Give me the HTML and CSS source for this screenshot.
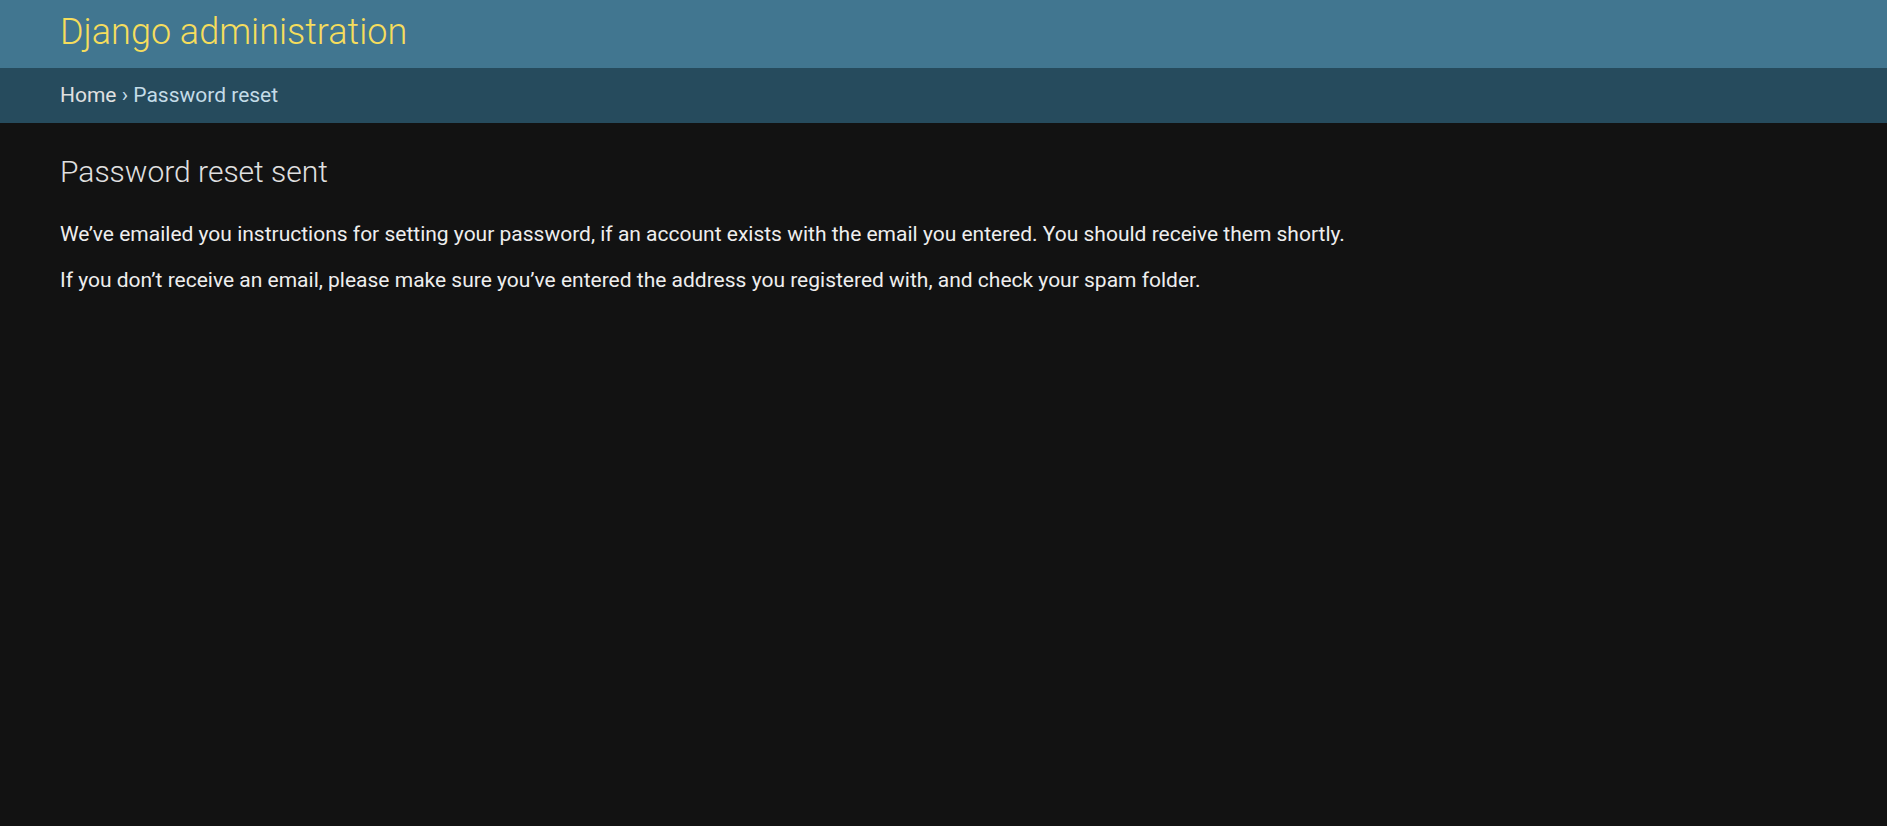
FILE: index.html
```html
<!DOCTYPE html>
<html>
    <head>
        <title>Password reset sent | Django site admin</title>
        <link rel="stylesheet" href="styles.css">
    </head>
    <body>

<!----- HEADER ----->
        <div id="header">
            <div id="branding">
                <h1 id="site-name"><a href="#">Django administration</a></h1>
            </div>
        </div>

<!----- BREADCRUMBS ----->
        <div class="breadcrumbs">
            <a href="#">Home</a> &rsaquo; Password reset
        </div>

<!----- CONTENT ----->
        <div id="content">
            <h1>Password reset sent</h1>
            <p>We’ve emailed you instructions for setting your password, if an account exists with the email you entered. You should receive them shortly.</p>
            <p>If you don’t receive an email, please make sure you’ve entered the address you registered with, and check your spam folder.</p>
        </div>

    </body>
</html>
```

FILE: styles.css
```css
body{
    margin: 0;
    padding: 0;
    font-family: Roboto, "Noto Sans", sans-serif;
    font-size: 21px;
    color: #eeeeee;
    background-color: #121212;
}
a{
    text-decoration: none;
}

/*----- HEADER -----*/
#header{
    padding: 15px 60px 19px;
    background-color: #417690;
}
#site-name{
    margin: 0;
    font-size: 36px;
    font-weight: 300;
    line-height: 34px;
}
#site-name a{
    color: #f5dd5d;
}

/*----- BREADCRUMBS -----*/
.breadcrumbs{
    padding: 15px 60px;
    line-height: 25px;
    background-color: #264b5d;
    color: #c4dce8;
}
.breadcrumbs a{
    color: #e0e0e0;
}

/*----- CONTENT -----*/
#content{
    padding: 30px 60px;
}
#content h1{
    margin: 0 0 29px;
    font-size: 30px;
    font-weight: 300;
    line-height: 38px;
    color: #e0e0e0;
}
#content p{
    margin: 0 0 16.8px;
    line-height: 29.4px;
}
```
